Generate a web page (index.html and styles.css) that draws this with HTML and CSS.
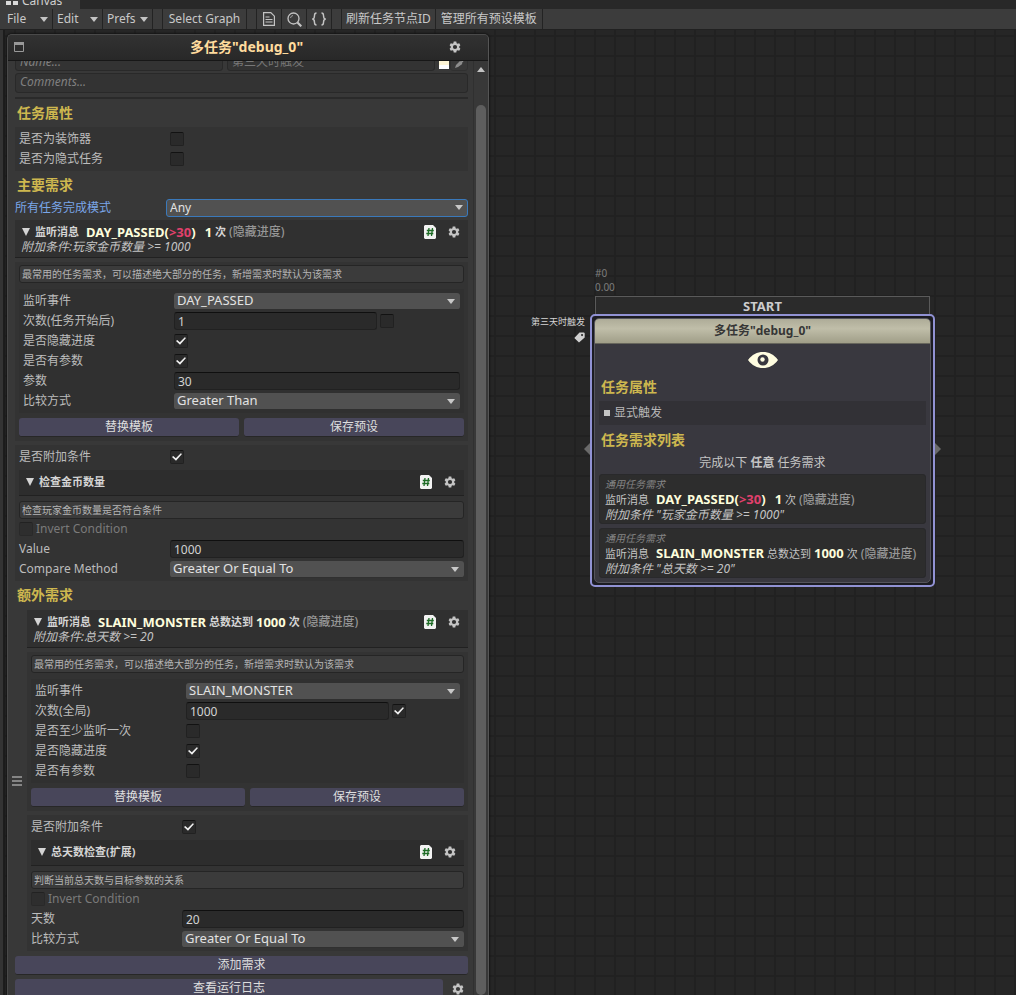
FILE: index.html
```html
<!DOCTYPE html>
<html lang="zh-CN">
<head>
<meta charset="utf-8">
<title>Canvas</title>
<link rel="stylesheet" href="styles.css">
</head>
<body>
<svg class="defs" aria-hidden="true">
  <symbol id="gear" viewBox="0 0 12 12">
    <path fill="currentColor" fill-rule="evenodd" d="M4.7 0.6h2.6l.3 1.6 1 .6 1.6-.6 1.2 2.1-1.2 1.1v1.2l1.2 1.1-1.2 2.1-1.6-.6-1 .6-.3 1.6H4.700l-.3-1.600-1-.6-1.600.6L.6 7.700l1.200-1.100V5.400L.6 4.300l1.200-2.100 1.600.6 1-.6zM6 3.900a2.100 2.100 0 1 0 0 4.200 2.100 2.100 0 0 0 0-4.200z"/>
  </symbol>
  <symbol id="script" viewBox="0 0 12 14">
    <path fill="#f2f2f2" d="M1 0h8l3 3v10l-1 1H1l-1-1V1z"/>
    <path fill="none" stroke="#1d6b25" stroke-width="1.300" d="M5 3 4 11M8.500 3l-1 8M2.800 5.500h7M2.300 8.500h7"/>
  </symbol>
  <symbol id="fold" viewBox="0 0 10 10">
    <path fill="currentColor" d="M1 1h8L5 9z"/>
  </symbol>
</svg>

<div class="tabs"><div class="tab">
  <svg width="12" height="8" viewBox="0 0 12 8"><path fill="#d8d8d8" d="M0 4h5v4H0zM7 4h5v4H7zM3 0h6v2H3z"/></svg>Canvas</div></div>

<nav class="toolbar">
  <button class="tool menu">File<span class="caret"></span></button>
  <button class="tool menu">Edit<span class="caret"></span></button>
  <button class="tool menu">Prefs<span class="caret"></span></button>
  <span class="gap"></span>
  <button class="tool wide">Select Graph</button>
  <span class="gap"></span>
  <button class="tool icon" aria-label="Document"><svg width="12" height="14" viewBox="0 0 12 14"><path fill="none" stroke="#c4c4c4" stroke-width="1.200" d="M.6.6h7.200l3.600 3.600v9.200H.6z"/><path stroke="#c4c4c4" stroke-width="1.200" d="M2.500 5h4M2.500 7.500h7M2.500 10h7"/></svg></button>
  <button class="tool icon" aria-label="Search"><svg width="15" height="15" viewBox="0 0 15 15"><circle cx="6.500" cy="6.500" r="5.500" fill="none" stroke="#c4c4c4" stroke-width="1.300"/><path stroke="#c4c4c4" stroke-width="2.200" d="m10.500 10.500 3.800 3.800"/><path fill="none" stroke="#a0a0a0" d="M3.500 6a3 3 0 0 1 2.500-2.500"/></svg></button>
  <button class="tool icon" aria-label="Source"><svg width="16" height="14" viewBox="0 0 16 14"><path fill="none" stroke="#c4c4c4" stroke-width="1.400" d="M5.500 1C3.500 1 3.500 1.800 3.500 3.500S3.500 7 1.200 7c2.300 0 2.300 1.800 2.300 3.500s0 2.500 2 2.500M10.500 1c2 0 2 .8 2 2.500s0 3.500 2.300 3.500c-2.300 0-2.300 1.800-2.300 3.500s0 2.500-2 2.500"/></svg></button>
  <span class="gap"></span>
  <button class="tool">刷新任务节点ID</button>
  <button class="tool manage">管理所有预设模板</button>
</nav>

<main class="workspace">
  <aside class="inspector">
    <header class="inspector-head">
      <svg width="10" height="10" viewBox="0 0 10 10"><path fill="none" stroke="#999" d="M.5.5h9v9h-9z"/><path fill="#999" d="M0 0h10v3H0z"/></svg>
      <h1>多任务"debug_0"</h1>
      <svg class="gear" width="12" height="12"><use href="#gear"/></svg>
    </header>
    <div class="inspector-body">
      <div class="content">
        <div class="name-row">
          <input class="note" aria-label="Name" placeholder="Name...">
          <input class="note" aria-label="Tag" value="第三天时触发">
          <span class="swatch"></span>
          <span class="picker"><svg width="9" height="9" viewBox="0 0 9 9"><path fill="#8c8c8c" d="M0 9l1-3 4-4 1 .6L8 .5l1 1L7 4l.3 1L3 8z"/></svg></span>
        </div>
        <input class="note comments" aria-label="Comments" placeholder="Comments...">
        <hr>
        <h2>任务属性</h2>
        <div class="box flags">
          <div class="row"><label for="deco">是否为装饰器</label><input type="checkbox" id="deco"></div>
          <div class="row"><label for="hid">是否为隐式任务</label><input type="checkbox" id="hid"></div>
        </div>
        <h2>主要需求</h2>
        <div class="row mode"><label for="mode">所有任务完成模式</label><span class="pick"><select id="mode"><option>Any</option></select></span></div>

        <section class="req">
          <header class="req-head">
            <div class="req-title"><svg class="fold" width="10" height="10"><use href="#fold"/></svg><span class="cn">监听消息</span><b class="key first">DAY_PASSED(<em class="hot">&gt;30</em>)</b><b class="key count">1</b><span class="cn">次</span><span class="dim">(隐藏进度)</span></div>
            <svg class="script" width="12" height="14"><use href="#script"/></svg>
            <svg class="gear" width="12" height="12"><use href="#gear"/></svg>
            <div class="req-sub">附加条件:玩家金币数量 &gt;= 1000</div>
          </header>
          <div class="box detail">
            <p class="help">最常用的任务需求，可以描述绝大部分的任务，新增需求时默认为该需求</p>
            <div class="fields">
              <div class="row"><label for="ev1">监听事件</label><span class="pick"><select id="ev1"><option>DAY_PASSED</option></select></span></div>
              <div class="row"><label for="n1">次数(任务开始后)</label><span class="pair"><input type="text" id="n1" value="1"><input type="checkbox" aria-label="次数选项"></span></div>
              <div class="row"><label for="h1">是否隐藏进度</label><input type="checkbox" id="h1" checked></div>
              <div class="row"><label for="p1">是否有参数</label><input type="checkbox" id="p1" checked></div>
              <div class="row"><label for="v1">参数</label><input type="text" id="v1" value="30"></div>
              <div class="row"><label for="c1">比较方式</label><span class="pick"><select id="c1"><option>Greater Than</option></select></span></div>
            </div>
            <div class="buttons"><button class="btn">替换模板</button><button class="btn">保存预设</button></div>
          </div>
          <div class="box extra">
            <div class="row"><label for="a1">是否附加条件</label><input type="checkbox" id="a1" checked></div>
            <header class="req-head sub">
              <div class="req-title"><svg class="fold" width="10" height="10"><use href="#fold"/></svg><span class="cn">检查金币数量</span></div>
              <svg class="script" width="12" height="14"><use href="#script"/></svg>
              <svg class="gear" width="12" height="12"><use href="#gear"/></svg>
            </header>
            <p class="help">检查玩家金币数量是否符合条件</p>
            <label class="invert"><input type="checkbox" disabled>Invert Condition</label>
            <div class="row"><label for="val1">Value</label><input type="text" id="val1" value="1000"></div>
            <div class="row"><label for="cm1">Compare Method</label><span class="pick"><select id="cm1"><option>Greater Or Equal To</option></select></span></div>
          </div>
        </section>

        <h2 class="more">额外需求</h2>
        <div class="drag-row">
          <svg class="handle" width="10" height="10" viewBox="0 0 10 10"><path fill="#858585" d="M0 0h10v2H0zM0 4h10v2H0zM0 8h10v2H0z"/></svg>
          <section class="req">
            <header class="req-head">
              <div class="req-title"><svg class="fold" width="10" height="10"><use href="#fold"/></svg><span class="cn">监听消息</span><b class="key first">SLAIN_MONSTER</b><span class="cn">总数达到</span><b class="key">1000</b><span class="cn">次</span><span class="dim">(隐藏进度)</span></div>
              <svg class="script" width="12" height="14"><use href="#script"/></svg>
              <svg class="gear" width="12" height="12"><use href="#gear"/></svg>
              <div class="req-sub">附加条件:总天数 &gt;= 20</div>
            </header>
            <div class="box detail">
              <p class="help">最常用的任务需求，可以描述绝大部分的任务，新增需求时默认为该需求</p>
              <div class="fields">
                <div class="row"><label for="ev2">监听事件</label><span class="pick"><select id="ev2"><option>SLAIN_MONSTER</option></select></span></div>
                <div class="row"><label for="n2">次数(全局)</label><span class="pair"><input type="text" id="n2" value="1000"><input type="checkbox" aria-label="次数选项" checked></span></div>
                <div class="row"><label for="l2">是否至少监听一次</label><input type="checkbox" id="l2"></div>
                <div class="row"><label for="h2">是否隐藏进度</label><input type="checkbox" id="h2" checked></div>
                <div class="row"><label for="p2">是否有参数</label><input type="checkbox" id="p2"></div>
              </div>
              <div class="buttons"><button class="btn">替换模板</button><button class="btn">保存预设</button></div>
            </div>
            <div class="box extra">
              <div class="row"><label for="a2">是否附加条件</label><input type="checkbox" id="a2" checked></div>
              <header class="req-head sub">
                <div class="req-title"><svg class="fold" width="10" height="10"><use href="#fold"/></svg><span class="cn">总天数检查(扩展)</span></div>
                <svg class="script" width="12" height="14"><use href="#script"/></svg>
                <svg class="gear" width="12" height="12"><use href="#gear"/></svg>
              </header>
              <p class="help">判断当前总天数与目标参数的关系</p>
              <label class="invert"><input type="checkbox" disabled>Invert Condition</label>
              <div class="row"><label for="val2">天数</label><input type="text" id="val2" value="20"></div>
              <div class="row"><label for="cm2">比较方式</label><span class="pick"><select id="cm2"><option>Greater Or Equal To</option></select></span></div>
            </div>
          </section>
        </div>
        <div class="footer-actions">
          <button class="btn">添加需求</button>
          <div class="log-row"><button class="btn">查看运行日志</button><svg class="gear" width="12" height="12"><use href="#gear"/></svg></div>
        </div>
      </div>
      <div class="scroll"><button class="up" aria-label="Scroll up"></button><div class="thumb"></div></div>
    </div>
  </aside>

  <div class="graph">
    <div class="node-wrap">
      <div class="ids"><div>#0</div><div>0.00</div></div>
      <div class="start">START</div>
      <div class="tag"><span>第三天时触发</span>
        <svg width="11" height="11" viewBox="0 0 11 11"><path fill="#d0d0d0" fill-rule="evenodd" d="M5.500 0.500H10l.7.7v4.300L5 10.600.3 6zM8 2a1 1 0 1 0 .1 0z"/></svg>
      </div>
      <span class="port in"></span><span class="port out"></span>
      <article class="node">
        <div class="node-inner">
          <h3 class="node-title">多任务"debug_0"</h3>
          <svg class="eye" width="30" height="16" viewBox="0 0 30 16"><path fill="#fffde0" fill-rule="evenodd" d="M0 8C4 2.500 9 0 15 0s11 2.500 15 8c-4 5.500-9 8-15 8S4 13.500 0 8zM15 2.500a5.500 5.500 0 1 0 0 11 5.500 5.500 0 0 0 0-11z"/><circle cx="14.500" cy="7.500" r="2.200" fill="#fffde0"/></svg>
          <div class="node-body">
            <h4>任务属性</h4>
            <div class="attr"><span class="bullet"></span>显式触发</div>
            <h4>任务需求列表</h4>
            <p class="any">完成以下 <b>任意</b> 任务需求</p>
            <div class="card">
              <div class="kind">通用任务需求</div>
              <div class="req-title plain"><span class="cn">监听消息</span><b class="key first">DAY_PASSED(<em class="hot">&gt;30</em>)</b><b class="key count">1</b><span class="cn">次</span><span class="dim">(隐藏进度)</span></div>
              <div class="cond">附加条件 "玩家金币数量 &gt;= 1000"</div>
            </div>
            <div class="card">
              <div class="kind">通用任务需求</div>
              <div class="req-title plain"><span class="cn">监听消息</span><b class="key first">SLAIN_MONSTER</b><span class="cn">总数达到</span><b class="key">1000</b><span class="cn">次</span><span class="dim">(隐藏进度)</span></div>
              <div class="cond">附加条件 "总天数 &gt;= 20"</div>
            </div>
          </div>
        </div>
      </article>
    </div>
  </div>
</main>
</body>
</html>
```

FILE: styles.css
```css
* { box-sizing: border-box; }
body {
  margin: 0;
  height: 100vh;
  display: flex;
  flex-direction: column;
  overflow: hidden;
  background: #262626;
  color: #bcbcbc;
  font: 12px/14px "Noto Sans", "Noto Sans CJK SC", sans-serif;
}
h1, h2, h3, h4, p { margin: 0; }
button, input, select { font: inherit; color: inherit; margin: 0; }
svg { display: block; flex: none; }
.defs { position: absolute; width: 0; height: 0; }

/* Window tab and toolbar */
.tabs { flex: none; height: 9px; display: flex; align-items: flex-end; overflow: hidden; background: #282828; }
.tab { width: 80px; height: 16px; padding-left: 6px; display: flex; align-items: center; gap: 4px; background: #3c3c3c; color: #d0d0d0; line-height: 16px; }
.toolbar { flex: none; height: 21px; display: flex; padding-left: 3px; background: #3c3c3c; border-bottom: 1px solid #212121; }
.tool { border: 0; border-right: 1px solid #232323; background: none; padding: 0 4px; white-space: nowrap; color: #c8c8c8; }
.menu { width: 50px; padding: 0 4px; display: flex; align-items: center; justify-content: space-between; }
.wide { min-width: 84px; }
.manage { padding: 0 5px; }
.caret { border: 4px solid transparent; border-top: 5px solid #c4c4c4; border-bottom: 0; }
.icon { width: 25px; display: flex; align-items: center; justify-content: center; }
.gap { width: 10px; border-right: 1px solid #232323; }

/* Workspace */
.workspace {
  flex: 1;
  min-height: 0;
  display: flex;
  padding: 4px 0 0 7px;
  background-color: #262626;
  background-image:
    linear-gradient(90deg, #212121 2px, transparent 2px),
    linear-gradient(#212121 2px, transparent 2px);
  background-size: 20px 20px;
  background-position: 14px 5px;
  box-shadow: inset 3px 0 #333, inset 5px 0 #1c1c1c;
}
.inspector {
  flex: none;
  width: 482px;
  display: flex;
  flex-direction: column;
  border: 1px solid #4a4a4a;
  border-bottom: 0;
  border-right-color: #555;
  border-radius: 5px 5px 0 0;
  background: #383838;
  box-shadow: 0 0 2px 1px #151515;
  overflow: hidden;
}
.inspector-head {
  flex: none;
  height: 26px;
  padding: 0 27px 1px 6px;
  display: flex;
  align-items: center;
  background: linear-gradient(#323232, #282828);
  border-bottom: 1px solid #171717;
}
.inspector-head h1 { flex: 1; padding-left: 20px; text-align: center; font-size: 14px; line-height: 24px; color: #ffdc9e; }
.gear { color: #c4c4c4; }
.inspector-body { flex: 1; min-height: 0; display: flex; padding-left: 7px; gap: 5px; overflow: hidden; }
.content { flex: 1; min-width: 0; margin-top: -10px; }
.scroll { flex: none; width: 15px; display: flex; flex-direction: column; align-items: center; border-left: 1px solid #303030; }
.up { width: 8px; height: 5px; margin: 6px 0 33px; padding: 0; border: 0; background: #c4c4c4; clip-path: polygon(50% 0, 100% 100%, 0 100%); }
.thumb { flex: 1; width: 10px; border-radius: 5px; background: #5e5e5e; }

/* Notes */
.name-row { display: flex; gap: 4px; height: 20px; margin-bottom: 2px; }
.note { flex: 1; min-width: 0; width: 100%; height: 20px; padding: 0 4px; border: 1px solid #292929; border-radius: 3px; background: #333; color: #777; }
.note::placeholder { color: #808080; font-style: italic; }
.swatch { width: 10px; height: 18px; margin-right: -3px; background: linear-gradient(#fff6d6 14px, #fff 14px); }
.picker { width: 18px; padding: 7px 0 0 4px; border: 1px solid #303030; border-radius: 3px; }
.comments { display: block; padding-bottom: 3px; }
hr { margin: 4px 0 0; border: 0; height: 2px; background: #2a2a2a; }
h2, h4 { height: 28px; padding-left: 2px; font-size: 14px; line-height: 27px; color: #cdb74f; }
.more { height: 29px; }

/* Rows and controls */
.box { background: #333; }
.flags { padding: 2px 4px; }
.row { height: 20px; display: grid; grid-template-columns: 151px minmax(0, 1fr); align-items: center; }
.row label { line-height: 16px; }
.mode { height: 18px; margin-bottom: 3px; color: #7aa6e8; }
.mode select { height: 18px; border: 1px solid #3a79bb; }
.pick { position: relative; display: block; }
.pick::after { content: ""; position: absolute; right: 5px; top: 6px; border: 4px solid transparent; border-top: 5px solid #c8c8c8; border-bottom: 0; pointer-events: none; }
select { display: block; width: 100%; height: 17px; padding: 0 3px; border: 0; border-radius: 3px; border-bottom: 1px solid #303030; background: #515151; color: #e2e2e2; font-size: 13px; line-height: 15px; appearance: none; }
.mode select { font-size: 12px; padding: 0 3px; line-height: 14px; }
input[type="text"] { width: 100%; min-width: 0; height: 18px; padding: 0 3px; border: 1px solid #212121; border-top-color: #0f0f0f; border-radius: 3px; background: #2a2a2a; color: #d2d2d2; }
input[type="checkbox"] { position: relative; width: 14px; height: 14px; appearance: none; border: 1px solid #212121; border-top-color: #121212; border-radius: 2px; background: #2a2a2a; }
input[type="checkbox"]:checked::after { content: ""; position: absolute; inset: 2px 1px; background: #f0f0f0; clip-path: polygon(0 50%, 12% 38%, 38% 66%, 88% 2%, 100% 14%, 40% 96%); }
.pair { display: flex; align-items: center; gap: 3px; }
.pair input[type="text"] { width: 203px; }
.pair input[type="checkbox"] { flex: none; }
.help { height: 18px; padding: 0 2px; border: 1px solid #252525; border-radius: 3px; background: #3b3b3b; font-size: 10px; line-height: 16px; color: #b4b4b4; white-space: nowrap; }
.invert { height: 20px; display: flex; align-items: center; gap: 3px; color: #7a7a7a; }
.invert input { opacity: 0.5; }
.btn { flex: 1; height: 19px; padding: 0; border: 0; border-bottom: 1px solid #272727; border-radius: 3px; background: #48465a; color: #dedede; line-height: 18px; }
.buttons { display: flex; gap: 5px; }

/* Requirement blocks */
.req { flex: 1; min-width: 0; }
.req-head { display: grid; grid-template-columns: minmax(0, 1fr) 12px 12px; column-gap: 12px; align-items: center; padding: 5px 8px 4px 6px; background: #303030; border-bottom: 1px solid #212121; }
.req-head.sub { margin: 3px 0 5px; padding-bottom: 6px; background: #2d2d2d; }
.req-title { height: 14px; display: flex; align-items: center; gap: 3px; white-space: nowrap; font-weight: bold; color: #d4d4d4; }
.cn { font-size: 11px; }
.fold + .cn { margin-left: 1px; }
.key { font-size: 13px; font-weight: 700; color: #fdfddc; }
.first { margin-left: 4px; }
.count { margin-left: 6px; }
.hot { font-style: normal; color: #e0406c; }
.dim { color: #969696; font-weight: 500; }
.req-sub, .cond { font-style: italic; color: #c4c4c4; white-space: nowrap; }
.req-sub { grid-column: 1 / -1; height: 14px; line-height: 16px; }
.detail { margin: 4px 0; padding: 3px 4px 4px; }
.fields { margin: 6px 0 5px; padding: 2px 4px; background: #303030; }
.extra { padding: 2px 4px; }
.drag-row { display: flex; align-items: center; margin-left: -3px; }
.handle { margin-right: 5px; }
.footer-actions { display: flex; flex-direction: column; gap: 4px; margin-top: 5px; }
.footer-actions > .btn { flex: none; }
.log-row { display: flex; align-items: center; gap: 9px; padding-right: 4px; }

/* Graph canvas */
.graph { position: relative; flex: 1; min-width: 0; }
.node-wrap { position: absolute; left: 101px; top: 232px; width: 345px; }
.ids { padding-left: 5px; font-size: 10px; color: #7d7d7d; }
.start { height: 20px; margin: 2px 5px 0; border: 1px solid #5a5a5a; border-bottom: 0; background: #2b2b2b; text-align: center; font-size: 13px; font-weight: bold; line-height: 18px; color: #ccc; }
.node { padding: 2px; margin-top: -2px; border: 2px solid #9192d4; border-radius: 5px; background: #1c1c22; }
.node-inner { border: 1px solid #55555c; border-radius: 5px; background: #39383f; overflow: hidden; }
.node-title { height: 25px; background: linear-gradient(#aeac98, #c0bea9 40%, #a09e88); border-bottom: 1px solid #67665c; text-align: center; font-size: 12px; line-height: 24px; color: #363636; }
.eye { margin: 8px auto 5px; }
.node-body { padding: 0 4px 4px; }
.attr { height: 24px; margin-bottom: 1px; padding-left: 5px; display: flex; align-items: center; gap: 4px; background: #323136; color: #b8b8b8; }
.bullet { width: 6px; height: 6px; background: #c4c4c4; }
.any { height: 20px; line-height: 18px; text-align: center; color: #c4c4c4; }
.card { height: 50px; padding: 2px 5px; border-radius: 3px; background: #2d2d2d; border: 1px solid #29292b; line-height: 15px; }
.card + .card { margin-top: 4px; }
.kind { height: 15px; font-size: 10px; font-style: italic; color: #858585; }
.plain { height: 15px; font-weight: normal; color: #c4c4c4; }
.tag { position: absolute; right: 350px; top: 49px; display: flex; flex-direction: column; align-items: flex-end; gap: 3px; font-size: 9px; white-space: nowrap; color: #d4d4d4; }
.port { position: absolute; top: 177px; border: 6px solid transparent; }
.in { right: 345px; border-right-color: #6a6a6a; border-left: 0; }
.out { left: 345px; border-left-color: #6a6a6a; border-right: 0; }
```
